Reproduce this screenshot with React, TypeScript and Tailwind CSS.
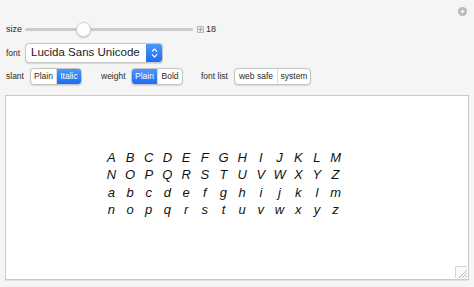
import React from "react";

const rows = [
  "ABCDEFGHIJKLM".split(""),
  "NOPQRSTUVWXYZ".split(""),
  "abcdefghijklm".split(""),
  "nopqrstuvwxyz".split(""),
];

function Seg({ items, active, widths }: { items: string[]; active: number; widths: string[] }) {
  return (
    <div className="flex h-[17px] rounded-[4px] border border-[#c4c4c4] bg-white shadow-[0_0.5px_1px_rgba(0,0,0,0.12)] overflow-hidden">
      {items.map((t, i) => (
        <div
          key={t}
          className={
            "flex items-center justify-center text-[8.5px] leading-none " +
            widths[i] +
            (i > 0 ? " border-l border-[#dcdcdc]" : "") +
            (i === active
              ? " bg-gradient-to-b from-[#4b98fb] to-[#1c6df1] text-white"
              : " text-[#2a2a2a]")
          }
        >
          {t}
        </div>
      ))}
    </div>
  );
}

export default function App() {
  return (
    <div
      className="relative flex flex-col w-[474px] h-[287px] bg-[#f5f5f5] px-[5px] pt-[22px] text-[#2b2b2b] overflow-hidden"
      style={{ fontFamily: '"Liberation Sans", Arial, sans-serif' }}
    >
      {/* add button in corner */}
      <div className="absolute right-[7px] top-[7px] w-[9px] h-[9px] rounded-full bg-[#b9b9b9] flex items-center justify-center">
        <svg width="5" height="5" viewBox="0 0 5 5">
          <path d="M2.5 0.5v4M0.5 2.5h4" stroke="white" strokeWidth="1.2" />
        </svg>
      </div>

      {/* size */}
      <div className="flex items-center h-[15px]">
        <div className="w-[20px] pl-[1px] text-[9px]">size</div>
        <div className="relative w-[168px] h-[15px] flex items-center">
          <div className="w-full h-[3px] rounded-full bg-[#cbcbcb]" />
          <div className="absolute left-[51px] top-0 w-[15px] h-[15px] rounded-full bg-white border border-[#cfcfcf] shadow-[0_1px_1.5px_rgba(0,0,0,0.2)]" />
        </div>
        <div className="ml-[4px] w-[7px] h-[7px] rounded-[1px] border border-[#b8b8b8] bg-[#e8e8e8] flex items-center justify-center">
          <svg width="5" height="5" viewBox="0 0 5 5">
            <path d="M2.5 0.5v4M0.5 2.5h4" stroke="#9a9a9a" strokeWidth="0.8" />
          </svg>
        </div>
        <div className="ml-[2px] text-[9px]">18</div>
      </div>

      {/* font */}
      <div className="flex items-center h-[20px] mt-[6px]">
        <div className="w-[20px] pl-[1px] text-[8.5px]">font</div>
        <div className="flex items-center w-[138px] h-[20px] rounded-[4px] border border-[#c6c6c6] bg-white shadow-[0_0.5px_1px_rgba(0,0,0,0.12)] overflow-hidden">
          <div className="flex-1 pl-[5px] text-[11.5px] text-[#1a1a1a] leading-none">Lucida Sans Unicode</div>
          <div className="w-[16px] h-full bg-gradient-to-b from-[#4b98fb] to-[#1c6df1] flex items-center justify-center">
            <svg width="7" height="12" viewBox="0 0 7 12">
              <path d="M1.2 4.3L3.5 2l2.3 2.3M1.2 7.7L3.5 10l2.3-2.3" stroke="white" strokeWidth="1.1" fill="none" strokeLinecap="round" strokeLinejoin="round" />
            </svg>
          </div>
        </div>
      </div>

      {/* slant / weight / font list */}
      <div className="flex items-center h-[17px] mt-[5px] text-[8.5px]">
        <div className="w-[25px] pl-[1px]">slant</div>
        <Seg items={["Plain", "Italic"]} active={1} widths={["w-[25px]", "w-[25px]"]} />
        <div className="ml-[19px] w-[30px]">weight</div>
        <Seg items={["Plain", "Bold"]} active={0} widths={["w-[25px]", "w-[25px]"]} />
        <div className="ml-[18px] w-[33px]">font list</div>
        <Seg items={["web safe", "system"]} active={-1} widths={["w-[42px]", "w-[33px]"]} />
      </div>

      {/* output */}
      <div className="relative shrink-0 mt-[10px] w-[464px] h-[185px] bg-white border border-[#c9c9c9] shadow-[0_1px_0_#e2e2e2] flex items-center pb-[8px] pl-[96px]">
        <div className="grid grid-cols-[repeat(13,18.7px)] text-[13px] leading-[17.5px] italic text-[#111]">
          {rows.map((r) =>
            r.map((c) => (
              <div key={c} className="text-center">
                {c}
              </div>
            ))
          )}
        </div>
        <div className="absolute right-[1px] bottom-[1px] w-[12px] h-[12px] border-l border-t border-[#d6d6d6] bg-[#fafafa]">
          <svg width="12" height="12" viewBox="0 0 12 12" className="absolute left-0 top-0">
            <path d="M3 11L11 3M6 11L11 6M9 11L11 9" stroke="#a8a8a8" strokeWidth="0.8" />
          </svg>
        </div>
      </div>
    </div>
  );
}
